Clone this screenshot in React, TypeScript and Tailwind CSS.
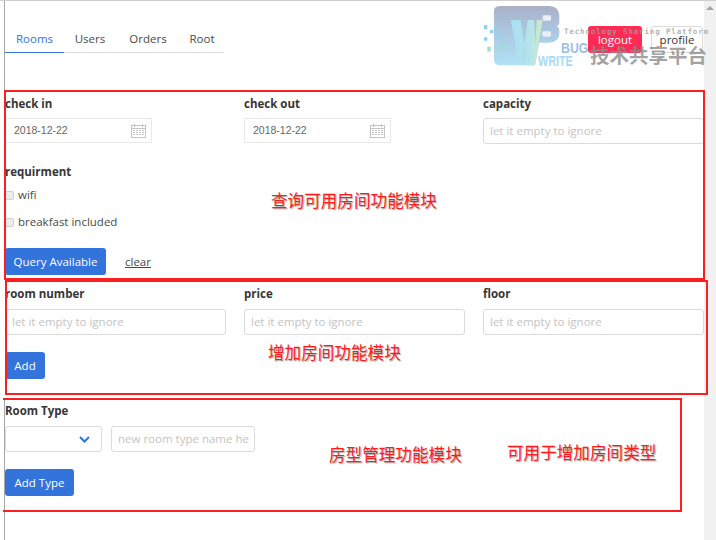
const font = { fontFamily: '"Open Sans", "Noto Sans", sans-serif' };

function Label({ children }: { children: React.ReactNode }) {
  return <div className="text-[11.5px] leading-[16px] font-bold text-[#363636]">{children}</div>;
}

function TextInput({ placeholder, className = "" }: { placeholder: string; className?: string }) {
  return (
    <div className={`h-[26px] border border-[#dbdbdb] rounded-[3px] flex items-center pl-[6px] overflow-hidden whitespace-nowrap text-[11.5px] text-[#c4c4c4] ${className}`}>
      {placeholder}
    </div>
  );
}

function CalendarIcon() {
  return (
    <svg width="15" height="14" viewBox="0 0 15 14" fill="none" stroke="#c4c4c4" strokeWidth="1">
      <rect x="0.5" y="1.5" width="14" height="12" />
      <path d="M0.5 4.5h14M3.5 0v3M11.5 0v3" />
      <path d="M2 6.5h11M2 8.5h11M2 10.5h11" strokeDasharray="2 1" />
    </svg>
  );
}

function DateInput() {
  return (
    <div className="w-[147px] h-[25px] mt-[6px] border border-[#e9e9e9] flex items-center justify-between pl-[8px] pr-[5px] text-[10.5px] text-[#666666]" style={{ fontFamily: '"Liberation Sans", sans-serif' }}>
      <span>2018-12-22</span>
      <CalendarIcon />
    </div>
  );
}

function Button({ children, className = "" }: { children: React.ReactNode; className?: string }) {
  return (
    <div className={`h-[27px] bg-[#3273dc] rounded-[3px] text-white text-[11.5px] flex items-center justify-center ${className}`}>
      {children}
    </div>
  );
}

function Checkbox({ label, className = "" }: { label: string; className?: string }) {
  return (
    <div className={`flex items-center gap-[4px] text-[11.5px] leading-[16px] text-[#4a4a4a] ${className}`}>
      <span className="w-[9px] h-[9px] bg-[#ececec] border border-[#d0d0d0] rounded-[2px]" />
      <span>{label}</span>
    </div>
  );
}

function RedBox({ className }: { className: string }) {
  return <div className={`absolute border-2 border-[#fa2020] pointer-events-none ${className}`} />;
}

function Note({ children, className }: { children: React.ReactNode; className: string }) {
  return (
    <div
      className={`absolute text-[16.6px] leading-[20px] text-[#fb1c1c] whitespace-nowrap ${className}`}
      style={{ fontFamily: '"Noto Sans CJK SC", sans-serif', textShadow: "1px 1px 1px #aaaaaa" }}
    >
      {children}
    </div>
  );
}

function Logo() {
  return (
    <svg width="110" height="72" viewBox="0 0 330 216" className="absolute left-[480px] top-0">
      <defs>
        <linearGradient id="wb" x1="0" y1="0" x2="0" y2="1">
          <stop offset="0" stopColor="#aab0c8" />
          <stop offset="0.45" stopColor="#abc8e2" />
          <stop offset="1" stopColor="#b0e2f4" />
        </linearGradient>
        <linearGradient id="w" x1="0" y1="0" x2="1" y2="0">
          <stop offset="0" stopColor="#a9def3" />
          <stop offset="0.6" stopColor="#b4e4ea" />
          <stop offset="1" stopColor="#d0ebc4" />
        </linearGradient>
      </defs>
      <path d="M42 32Q42 18 62 18H205Q238 18 238 52V68Q238 76 230 78Q238 82 238 92V100Q238 128 205 128H178L165 196H62Q42 196 42 180Z" fill="url(#wb)" />
      <path d="M92 60H122L133 140L143 60H162L166 135L170 60H188L165 196H140L133 130L122 196H117Z" fill="url(#w)" />
      <rect x="188" y="46" width="25" height="16" rx="4" fill="#eaeef6" />
      <rect x="187" y="94" width="26" height="16" rx="4" fill="#eaeef6" />
      <g fill="#90d2ec">
        <rect x="12" y="75" width="10" height="13" />
        <rect x="42" y="75" width="8" height="10" />
        <rect x="12" y="112" width="10" height="10" />
        <rect x="30" y="90" width="10" height="10" />
        <rect x="50" y="100" width="12" height="12" />
      </g>
      <g fill="#9fdcd4">
        <rect x="65" y="130" width="10" height="12" />
        <rect x="22" y="140" width="10" height="15" />
        <rect x="55" y="145" width="7" height="10" />
      </g>
    </svg>
  );
}

export default function App() {
  return (
    <div className="relative w-[716px] h-[540px] overflow-hidden bg-white flex flex-col" style={font}>
      <div className="h-px bg-[#cfcfcf] shrink-0" />
      <div className="flex flex-1 min-h-0">
        <div className="w-[4px] shrink-0" />
        <div className="w-px bg-[#a8a8a8] shrink-0 h-[91px]" />
        <main className="w-[699px] shrink-0">
          {/* tabs */}
          <div className="mt-[24px] w-[219px] h-[28px] flex border-b border-[#dbdbdb] text-[11.5px] text-[#4a4a4a]">
            <div className="w-[59px] text-center leading-[27px] text-[#3273dc] border-b border-[#3273dc] h-[28px]">Rooms</div>
            <div className="w-[52px] text-center leading-[27px]">Users</div>
            <div className="w-[64px] text-center leading-[27px]">Orders</div>
            <div className="w-[44px] text-center leading-[27px]">Root</div>
          </div>

          {/* query */}
          <div className="mt-[43px] grid grid-cols-[221px_221px_221px] gap-x-[18px]">
            <div><Label>check in</Label><DateInput /></div>
            <div><Label>check out</Label><DateInput /></div>
            <div><Label>capacity</Label><TextInput placeholder="let it empty to ignore" className="mt-[6px]" /></div>
          </div>

          <div className="mt-[20px]"><Label>requirment</Label></div>
          <Checkbox label="wifi" className="mt-[7px]" />
          <Checkbox label="breakfast included" className="mt-[11px]" />

          <div className="mt-[18px] flex items-center">
            <Button className="w-[101px]">Query Available</Button>
            <span className="ml-[19px] text-[11.5px] text-[#4a4a4a] underline">clear</span>
          </div>

          {/* add room */}
          <div className="mt-[11px] grid grid-cols-[221px_221px_221px] gap-x-[18px]">
            <div><Label>room number</Label><TextInput placeholder="let it empty to ignore" className="mt-[7px]" /></div>
            <div><Label>price</Label><TextInput placeholder="let it empty to ignore" className="mt-[7px]" /></div>
            <div><Label>floor</Label><TextInput placeholder="let it empty to ignore" className="mt-[7px]" /></div>
          </div>
          <Button className="w-[40px] mt-[17px]">Add</Button>

          {/* room type */}
          <div className="mt-[24px]"><Label>Room Type</Label></div>
          <div className="mt-[7px] flex gap-[9px]">
            <div className="w-[97px] h-[26px] border border-[#dbdbdb] rounded-[3px] flex items-center justify-end pr-[11px]">
              <svg width="11" height="7" viewBox="0 0 11 7" fill="none" stroke="#3273dc" strokeWidth="2">
                <path d="M1 1l4.5 4.5L10 1" />
              </svg>
            </div>
            <TextInput placeholder="new room type name he" className="w-[144px]" />
          </div>
          <Button className="w-[69px] mt-[17px]">Add Type</Button>
        </main>
        <div className="w-[12px] ml-auto bg-[#f1f1f1] flex justify-center pt-[5px]">
          <div className="w-0 h-0 border-x-[4px] border-x-transparent border-b-[4px] border-b-[#a3a3a3]" />
        </div>
      </div>

      {/* lower part of left rule */}
      <div className="absolute left-[4px] top-[399px] w-px h-[141px] bg-[#a8a8a8]" />

      {/* header buttons */}
      <div className="absolute left-[588px] top-[26px] w-[54px] h-[27px] bg-[#ff2b56] rounded-[3px] text-white text-[11.5px] flex items-center justify-center">logout</div>
      <div className="absolute left-[651px] top-[26px] w-[52px] h-[27px] border border-[#dbdbdb] rounded-[3px] text-[#363636] text-[11.5px] flex items-center justify-center">profile</div>

      {/* watermark */}
      <Logo />
      <div className="absolute left-[561px] top-[39px] text-[15px] leading-[18px] font-bold text-[#9cc0e4]" style={{ fontFamily: '"Liberation Sans", sans-serif', transform: "scaleX(0.82)", transformOrigin: "left" }}>BUG</div>
      <div className="absolute left-[538px] top-[52px] text-[15px] leading-[18px] font-bold text-[#a6dcf3]" style={{ fontFamily: '"Liberation Sans", sans-serif', transform: "scaleX(0.72)", transformOrigin: "left" }}>WRITE</div>
      <div className="absolute left-[564px] top-[26px] text-[7.5px] leading-[12px] font-bold text-[#a0a0a0]/80 whitespace-nowrap tracking-[0.85px]" style={{ fontFamily: '"DejaVu Sans Mono", monospace' }}>Technology Sharing Platform</div>
      <div className="absolute left-[590px] top-[43px] text-[19.5px] leading-[24px] font-bold text-[#8a8a8a]/80 whitespace-nowrap" style={{ fontFamily: '"Noto Sans CJK SC", sans-serif' }}>技术共享平台</div>

      {/* annotations */}
      <RedBox className="left-[4px] top-[90px] w-[701px] h-[190px]" />
      <RedBox className="left-[5px] top-[280px] w-[703px] h-[115px]" />
      <RedBox className="left-[3px] top-[398px] w-[679px] h-[114px] border-l-0" />
      <Note className="left-[271px] top-[190px]">查询可用房间功能模块</Note>
      <Note className="left-[268px] top-[342px]">增加房间功能模块</Note>
      <Note className="left-[329px] top-[444px]">房型管理功能模块</Note>
      <Note className="left-[507px] top-[442px]">可用于增加房间类型</Note>
    </div>
  );
}
